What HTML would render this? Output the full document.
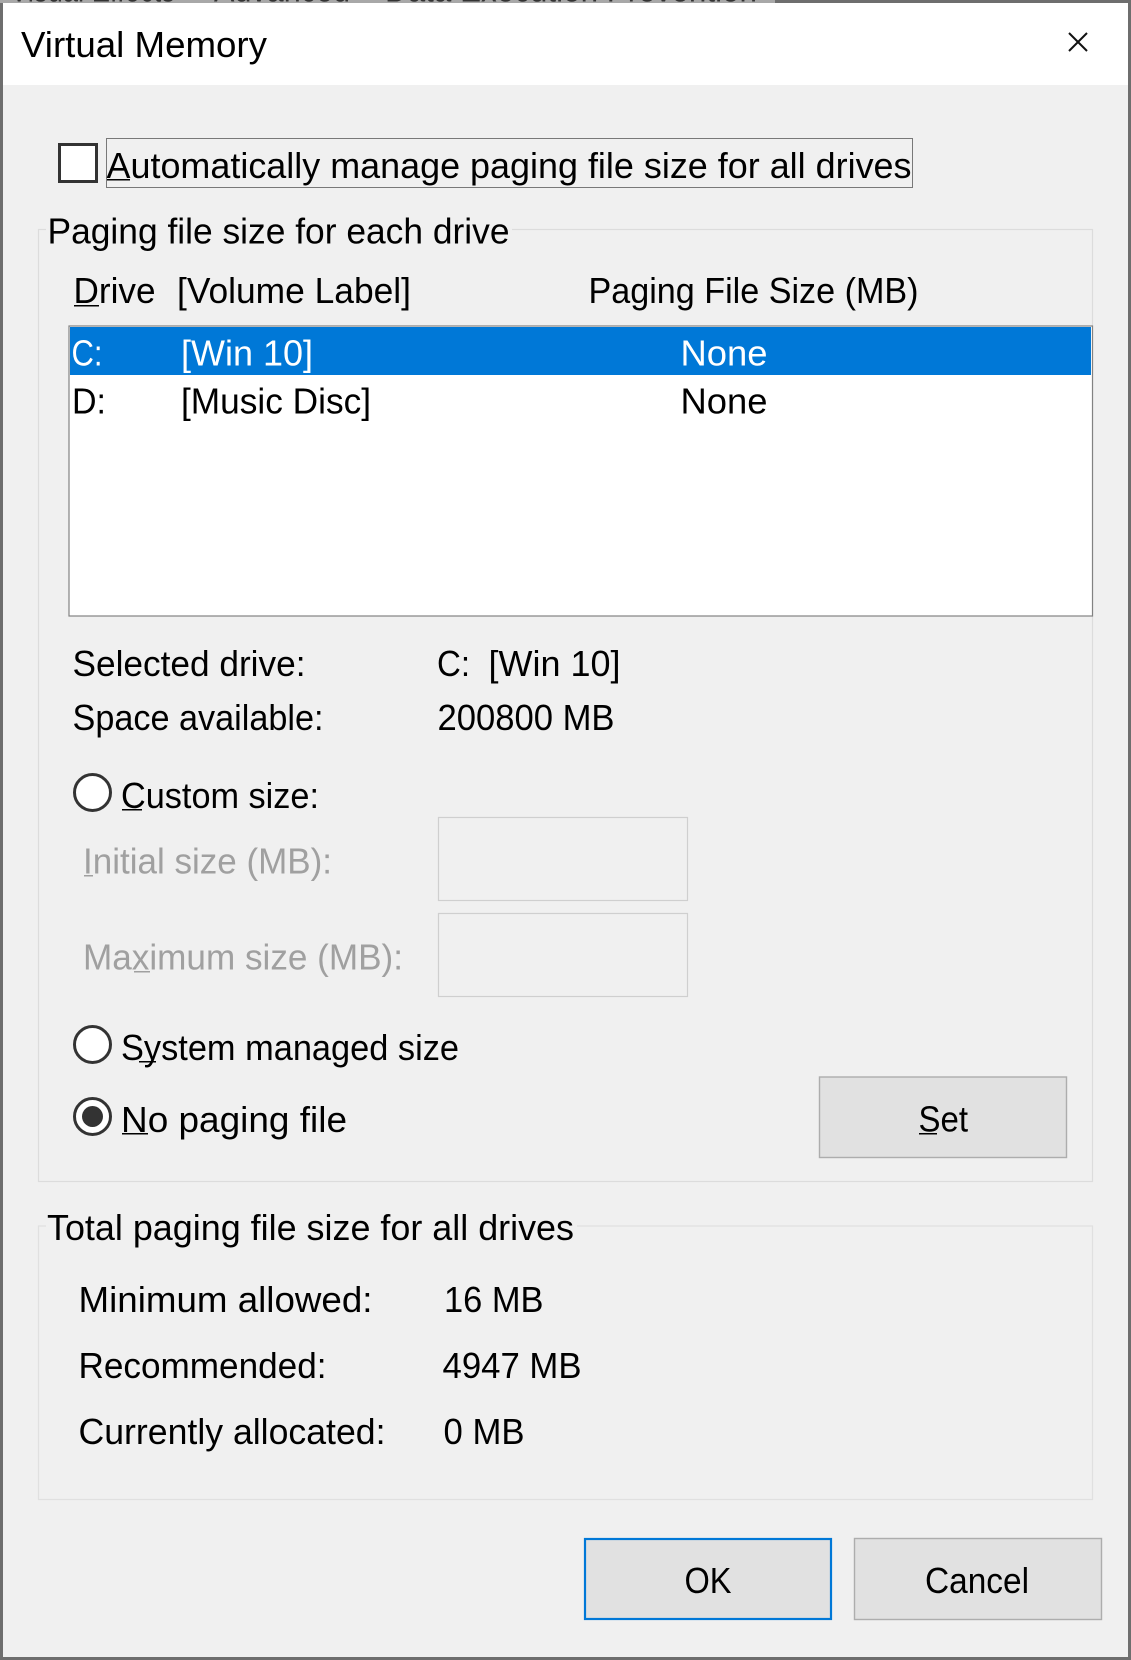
<!DOCTYPE html>
<html><head><meta charset="utf-8"><title>Virtual Memory</title>
<style>
html,body{margin:0;padding:0;background:#6e6e6e;width:1131px;height:1660px;overflow:hidden}
svg{display:block}
text{font-family:"Liberation Sans",sans-serif;font-size:36px;fill:#000}
.d{fill:#a0a0a0}.w{fill:#fff}
</style></head><body>
<svg width="1131" height="1660" viewBox="0 0 1131 1660" xmlns="http://www.w3.org/2000/svg">
<rect width="1131" height="1660" fill="#6e6e6e"/>
<rect x="0" y="0" width="775" height="3" fill="#a8a8a8"/>
<g><text x="10" y="1.500" textLength="165" lengthAdjust="spacingAndGlyphs" style="fill:#333">Visual Effects</text>
<text x="214" y="1.500" textLength="136" lengthAdjust="spacingAndGlyphs" style="fill:#333">Advanced</text>
<text x="385" y="1.500" textLength="372" lengthAdjust="spacingAndGlyphs" style="fill:#333">Data Execution Prevention</text></g>
<rect x="3" y="3" width="1125" height="1654" fill="#f0f0f0"/>
<rect x="3" y="3" width="1125" height="82" fill="#fff"/>
<text x="21" y="57" textLength="246" lengthAdjust="spacingAndGlyphs">Virtual Memory</text>
<path d="M1069 33L1087 51M1087 33L1069 51" stroke="#111" stroke-width="2" fill="none"/>

<rect x="59.500" y="144.500" width="37" height="37" fill="#fff" stroke="#333" stroke-width="3"/>
<rect x="106.500" y="138.500" width="806" height="49" fill="none" stroke="#000" stroke-width="1" stroke-dasharray="1 1"/>
<text x="106.500" y="178" textLength="805" lengthAdjust="spacingAndGlyphs">Automatically manage paging file size for all drives</text>
<rect x="107" y="179" width="23" height="1.500" fill="#000"/>

<rect x="38.500" y="229.500" width="1054" height="952" fill="none" stroke="#dcdcdc" stroke-width="1.200"/>
<rect x="46" y="226" width="466" height="8" fill="#f0f0f0"/>
<text x="47.500" y="243.500" textLength="462" lengthAdjust="spacingAndGlyphs">Paging file size for each drive</text>

<text x="73.500" y="303" textLength="82" lengthAdjust="spacingAndGlyphs">Drive</text>
<rect x="74" y="305" width="25" height="1.500" fill="#000"/>
<text x="177" y="303" textLength="234" lengthAdjust="spacingAndGlyphs">[Volume Label]</text>
<text x="588.500" y="303" textLength="330" lengthAdjust="spacingAndGlyphs">Paging File Size (MB)</text>

<rect x="69" y="326" width="1023.500" height="290" fill="#fff" stroke="#828282" stroke-width="1.200"/>
<rect x="70" y="327" width="1021" height="48" fill="#0078d7"/>
<text class="w" x="71.500" y="365.500" textLength="31" lengthAdjust="spacingAndGlyphs">C:</text>
<text class="w" x="181" y="365.500" textLength="132" lengthAdjust="spacingAndGlyphs">[Win 10]</text>
<text class="w" x="680.500" y="365.500" textLength="87" lengthAdjust="spacingAndGlyphs">None</text>
<text x="72" y="413.500" textLength="34" lengthAdjust="spacingAndGlyphs">D:</text>
<text x="181" y="413.500" textLength="190" lengthAdjust="spacingAndGlyphs">[Music Disc]</text>
<text x="680.500" y="413.500" textLength="87" lengthAdjust="spacingAndGlyphs">None</text>

<text x="72.500" y="676" textLength="233" lengthAdjust="spacingAndGlyphs">Selected drive:</text>
<text x="437" y="676" textLength="33" lengthAdjust="spacingAndGlyphs">C:</text>
<text x="488.500" y="676" textLength="132" lengthAdjust="spacingAndGlyphs">[Win 10]</text>
<text x="72.500" y="730" textLength="251" lengthAdjust="spacingAndGlyphs">Space available:</text>
<text x="437.500" y="730" textLength="177" lengthAdjust="spacingAndGlyphs">200800 MB</text>

<circle cx="92.500" cy="792.500" r="18" fill="#fff" stroke="#333" stroke-width="3"/>
<text x="121" y="808" textLength="198" lengthAdjust="spacingAndGlyphs">Custom size:</text>
<rect x="122" y="809" width="20" height="1.500" fill="#000"/>

<text class="d" x="83" y="873.500" textLength="249" lengthAdjust="spacingAndGlyphs">Initial size (MB):</text>
<rect x="84" y="875" width="9" height="1.500" fill="#a0a0a0"/>
<rect x="438.500" y="817.500" width="249" height="83" fill="#f0f0f0" stroke="#cfcfcf" stroke-width="1.200"/>
<text class="d" x="83" y="969.500" textLength="320" lengthAdjust="spacingAndGlyphs">Maximum size (MB):</text>
<rect x="134" y="971" width="16" height="1.500" fill="#a0a0a0"/>
<rect x="438.500" y="913.500" width="249" height="83" fill="#f0f0f0" stroke="#cfcfcf" stroke-width="1.200"/>

<circle cx="92.500" cy="1044.500" r="18" fill="#fff" stroke="#333" stroke-width="3"/>
<text x="121" y="1060" textLength="338" lengthAdjust="spacingAndGlyphs">System managed size</text>
<rect x="139" y="1061" width="17" height="1.500" fill="#000"/>

<circle cx="92.500" cy="1116.500" r="18" fill="#fff" stroke="#333" stroke-width="3"/>
<circle cx="92.500" cy="1116.500" r="10.500" fill="#333"/>
<text x="121" y="1132" textLength="226" lengthAdjust="spacingAndGlyphs">No paging file</text>
<rect x="122" y="1133" width="26" height="1.500" fill="#000"/>

<rect x="819.500" y="1077" width="247" height="80.500" fill="#e1e1e1" stroke="#adadad" stroke-width="1.400"/>
<text x="918.500" y="1131.500" textLength="49.500" lengthAdjust="spacingAndGlyphs">Set</text>
<rect x="919" y="1133" width="18" height="1.500" fill="#000"/>

<rect x="38.500" y="1226" width="1054" height="273.500" fill="none" stroke="#e0e0e0" stroke-width="1.200"/>
<rect x="46" y="1222" width="531" height="8" fill="#f0f0f0"/>
<text x="47" y="1240" textLength="527" lengthAdjust="spacingAndGlyphs">Total paging file size for all drives</text>
<text x="78.500" y="1312" textLength="294" lengthAdjust="spacingAndGlyphs">Minimum allowed:</text>
<text x="444" y="1312" textLength="99.500" lengthAdjust="spacingAndGlyphs">16 MB</text>
<text x="78.500" y="1378" textLength="248" lengthAdjust="spacingAndGlyphs">Recommended:</text>
<text x="442.500" y="1378" textLength="139" lengthAdjust="spacingAndGlyphs">4947 MB</text>
<text x="78.500" y="1444" textLength="307" lengthAdjust="spacingAndGlyphs">Currently allocated:</text>
<text x="443.500" y="1444" textLength="81" lengthAdjust="spacingAndGlyphs">0 MB</text>

<rect x="585" y="1539" width="246" height="80" fill="#e1e1e1" stroke="#0078d7" stroke-width="2.200"/>
<text x="684.500" y="1593" textLength="47" lengthAdjust="spacingAndGlyphs">OK</text>
<rect x="854.500" y="1538.500" width="247" height="81" fill="#e1e1e1" stroke="#adadad" stroke-width="1.400"/>
<text x="925" y="1593" textLength="104" lengthAdjust="spacingAndGlyphs">Cancel</text>
</svg>
</body></html>
